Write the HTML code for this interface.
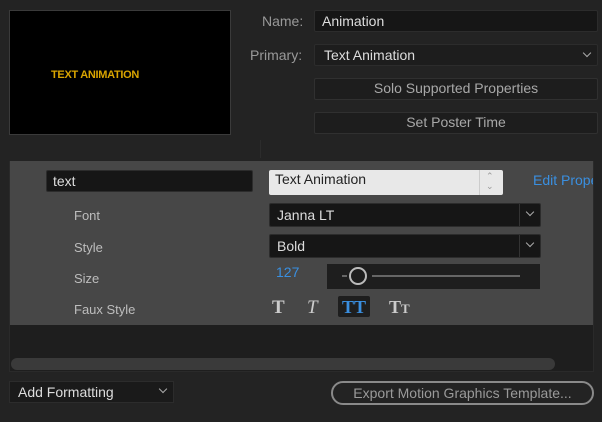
<!DOCTYPE html>
<html><head><style>
*{margin:0;padding:0;box-sizing:border-box;white-space:nowrap}
body{width:602px;height:422px;background:#232323;position:relative;overflow:hidden;font-family:"Liberation Sans Narrow","Liberation Sans",sans-serif;color:#d4d4d4;font-size:14px}
.a{position:absolute}
.in{position:absolute;background:#161616;border:1px solid #2c2c2c;border-radius:2px}
.lbl{position:absolute;color:#999;font-size:14px}
.btn{position:absolute;background:#1d1d1d;border:1px solid #303030;border-radius:2px;text-align:center;color:#a8a8a8;font-size:14px;line-height:19px}
.chev{position:absolute;width:6px;height:6px;border-right:1px solid #aaa;border-bottom:1px solid #aaa;transform:rotate(45deg)}
.sm{font-size:13px;color:#bdbdbd}
</style></head><body>
<div class="a" style="left:9px;top:10px;width:222px;height:125px;background:#000;border:1px solid #3a3a3a"></div>
<div class="a" style="left:51px;top:69px;font-family:'Liberation Sans',sans-serif;font-weight:bold;font-size:11px;color:#d9a400;letter-spacing:-0.3px">TEXT ANIMATION</div>
<div class="a" style="left:260px;top:140px;width:1px;height:18px;background:#2c2c2c"></div>

<div class="lbl" style="left:262px;top:13px">Name:</div>
<div class="in" style="left:314px;top:10px;width:284px;height:22px;padding:2px 7px;color:#ddd">Animation</div>
<div class="lbl" style="left:250px;top:47px">Primary:</div>
<div class="in" style="left:314px;top:44px;width:284px;height:22px;padding:2px 9px;color:#ddd;background:#1d1d1d">Text Animation</div>
<div class="chev" style="left:584px;top:50px"></div>
<div class="btn" style="left:314px;top:78px;width:284px;height:22px">Solo Supported Properties</div>
<div class="btn" style="left:314px;top:112px;width:284px;height:22px">Set Poster Time</div>

<div class="a" style="left:9px;top:161px;width:585px;height:211px;background:#1e1e1e;border:1px solid #2a2a2a"></div>
<div class="a" style="left:10px;top:161px;width:583px;height:164px;background:#474747;overflow:hidden">
<div class="a" style="left:523px;top:11px;color:#3a8fe0">Edit Properties</div>
</div>
<div class="a" style="left:11px;top:358px;width:544px;height:12px;background:#3a3a3a;border-radius:6px"></div>

<div class="in" style="left:46px;top:170px;width:207px;height:22px;padding:2px 6px;color:#ddd">text</div>
<div class="a" style="left:269px;top:170px;width:234px;height:25px;background:#e8e8e8;border-radius:2px;color:#222;padding:1px 6px">Text Animation</div>
<div class="a" style="left:479px;top:170px;width:1px;height:25px;background:#ccc"></div>
<div class="a" style="left:486px;top:171px;font-size:9px;color:#999">&#8963;</div>
<div class="a" style="left:486px;top:181px;font-size:9px;color:#999">&#8964;</div>

<div class="lbl sm" style="left:74px;top:208px">Font</div>
<div class="in" style="left:269px;top:203px;width:272px;height:24px;padding:3px 7px;color:#ddd"><span>Janna LT</span></div>
<div class="a" style="left:519px;top:204px;width:1px;height:22px;background:#333"></div>
<div class="chev" style="left:527px;top:209px"></div>
<div class="lbl sm" style="left:74px;top:240px">Style</div>
<div class="in" style="left:269px;top:234px;width:272px;height:24px;padding:3px 7px;color:#ddd">Bold</div>
<div class="a" style="left:519px;top:235px;width:1px;height:22px;background:#333"></div>
<div class="chev" style="left:527px;top:240px"></div>
<div class="lbl sm" style="left:74px;top:271px">Size</div>
<div class="a" style="left:276px;top:264px;color:#3a8fe0">127</div>
<div class="a" style="left:327px;top:264px;width:213px;height:25px;background:#1e1e1e"></div>
<div class="a" style="left:342px;top:275px;width:5px;height:2px;background:#666"></div>
<div class="a" style="left:372px;top:275px;width:148px;height:2px;background:#666"></div>
<div class="a" style="left:349px;top:267px;width:18px;height:18px;border:2px solid #bbb;border-radius:50%;background:#1e1e1e"></div>
<div class="lbl sm" style="left:74px;top:302px">Faux Style</div>
<div class="a" style="left:272px;top:297px;font-family:'Liberation Serif',serif;font-weight:bold;font-size:19px;color:#ccc">T</div>
<div class="a" style="left:307px;top:297px;font-family:'Liberation Serif',serif;font-style:italic;font-size:19px;color:#ccc">T</div>
<div class="a" style="left:338px;top:296px;width:32px;height:21px;background:#1e1e1e;border-radius:2px"></div>
<div class="a" style="left:342px;top:297px;font-family:'Liberation Serif',serif;font-weight:bold;font-size:18px;color:#3a8fe0">TT</div>
<div class="a" style="left:389px;top:297px;font-family:'Liberation Serif',serif;font-weight:bold;font-size:18px;color:#ccc">T<span style="font-size:13px">T</span></div>

<div class="a" style="left:9px;top:381px;width:165px;height:22px;background:#1a1a1a;border:1px solid #2c2c2c;padding:2px 8px;color:#ddd">Add Formatting</div>
<div class="chev" style="left:160px;top:386px"></div>
<div class="a" style="left:331px;top:381px;width:263px;height:24px;border:2px solid #8a8a8a;border-radius:12px;text-align:center;line-height:20px;color:#9a9a9a">Export Motion Graphics Template...</div>
</body></html>
